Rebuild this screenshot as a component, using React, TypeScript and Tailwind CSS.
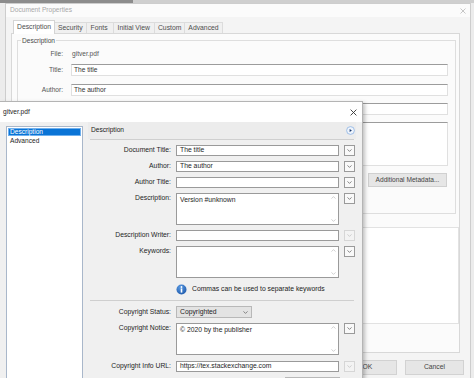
import React from "react";

const Chev = ({ dim = false, up = false }: { dim?: boolean; up?: boolean }) => (
  <svg width="5" height="3" viewBox="0 0 5 3" className="block">
    <polyline
      points={up ? "0.5,2.6 2.5,0.6 4.5,2.6" : "0.5,0.4 2.5,2.4 4.5,0.4"}
      fill="none"
      stroke={dim ? "#c4c4c4" : "#6a6a6a"}
      strokeWidth="0.8"
    />
  </svg>
);

const DropBtn = ({ dim = false }: { dim?: boolean }) => (
  <div
    className={`w-[11px] h-[11px] shrink-0 flex items-center justify-center border ${
      dim ? "border-[#d6d6d6] bg-[#f3f3f3]" : "border-[#9a9a9a] bg-[#f9f9f9]"
    }`}
  >
    <Chev dim={dim} />
  </div>
);

const Field = ({ label, value = "", dim = false }: { label: string; value?: string; dim?: boolean }) => (
  <div className="flex items-center gap-[5px] h-[11px]">
    <div className="w-[83px] text-right leading-none whitespace-nowrap">{label}</div>
    <div className="w-[163px] h-[11px] border border-[#9a9a9a] bg-white flex items-center px-[3px] leading-none">
      {value}
    </div>
    <DropBtn dim={dim} />
  </div>
);

const Area = ({ label, value = "", btn = true }: { label: string; value?: string; btn?: boolean }) => (
  <div className="flex items-start gap-[5px]">
    <div className="w-[83px] h-[11px] flex items-center justify-end leading-none whitespace-nowrap">{label}</div>
    <div className="w-[163px] h-[32px] border border-[#9a9a9a] bg-white flex">
      <div className="flex-1 px-[3px] pt-[2px] leading-[8px]">{value}</div>
      <div className="w-[9px] flex flex-col items-center justify-between py-[2px]">
        <Chev dim up />
        <Chev dim />
      </div>
    </div>
    {btn ? <DropBtn /> : <div className="w-[11px]" />}
  </div>
);

const BgInput = ({ h = 12, text = "" }: { h?: number; text?: string }) => (
  <div
    className="w-[377px] bg-white border border-[#e0e0e0] border-t-[#9c9c9c] flex items-center px-[2px] text-[6.6px] text-[#333] leading-none"
    style={{ height: h }}
  >
    {text}
  </div>
);

export default function App() {
  return (
    <div className="relative w-[474px] h-[378px] overflow-hidden bg-[#ececec] font-['Liberation_Sans',Arial,sans-serif]">
      {/* top strip */}
      <div className="h-[3px] flex bg-[#cfcfcf]">
        <div className="w-[133px] bg-[#8c8c8c]" />
      </div>

      {/* background dialog */}
      <div className="ml-[5px] w-[466px] h-[375px] border-x border-t border-[#cdcdcd] bg-[#f4f4f4] flex flex-col">
        <div className="h-[13px] bg-[#fbfbfb] flex items-center justify-between pl-[4px] pr-[4px]">
          <span className="text-[6.6px] text-[#a8a8a8] leading-none">Document Properties</span>
          <svg width="6" height="6" viewBox="0 0 6 6">
            <path d="M0.5 0.5L5.5 5.5M5.5 0.5L0.5 5.5" stroke="#b9b9b9" strokeWidth="0.8" />
          </svg>
        </div>

        {/* tabs */}
        <div className="flex items-end pt-[3px] pl-[7px] h-[16px] text-[6.8px] text-[#4d4d4d] leading-none">
          <div className="h-[14px] px-[3px] bg-white border-x border-t border-[#d4d4d4] flex items-center -mb-px relative z-10">
            Description
          </div>
          <div className="h-[11px] flex border-t border-r border-[#dcdcdc] bg-[#f0f0f0]">
            <div className="px-[3px] flex items-center border-r border-[#dcdcdc]">Security</div>
            <div className="px-[4px] pr-[5px] flex items-center border-r border-[#dcdcdc]">Fonts</div>
            <div className="px-[4px] flex items-center border-r border-[#dcdcdc]">Initial View</div>
            <div className="px-[3px] flex items-center border-r border-[#dcdcdc]">Custom</div>
            <div className="px-[3px] flex items-center">Advanced</div>
          </div>
        </div>

        {/* panel */}
        <div className="ml-[5px] w-[449px] h-[320px] border border-[#d8d8d8] bg-[#fbfbfb] flex flex-col">
          <fieldset className="mt-[2px] ml-[5px] w-[439px] border border-[#dedede] pb-[26px]">
            <legend className="ml-[3px] px-[1px] text-[6.6px] leading-[9px] text-[#4a4a4a]">Description</legend>
            <div className="flex flex-col text-[6.6px] text-[#555] leading-none">
              <div className="flex items-center h-[10px] mt-[4px]">
                <div className="w-[45px] text-right">File:</div>
                <div className="ml-[9px]">gitver.pdf</div>
              </div>
              <div className="flex items-center mt-[5px]">
                <div className="w-[45px] text-right">Title:</div>
                <div className="ml-[8px]">
                  <BgInput text="The title" />
                </div>
              </div>
              <div className="flex items-center mt-[8px]">
                <div className="w-[45px] text-right">Author:</div>
                <div className="ml-[8px]">
                  <BgInput text="The author" />
                </div>
              </div>
              <div className="flex items-center mt-[7px]">
                <div className="w-[45px] text-right">Subject:</div>
                <div className="ml-[8px]">
                  <BgInput />
                </div>
              </div>
              <div className="flex items-start mt-[7px]">
                <div className="w-[45px] text-right">Keywords:</div>
                <div className="ml-[8px]">
                  <BgInput h={44} />
                </div>
              </div>
              <div className="flex justify-end mt-[7px] pr-[8px]">
                <div className="w-[79px] h-[14px] bg-[#e6e6e6] border border-[#d0d0d0] flex items-center justify-center text-[6.6px] text-[#444]">
                  Additional Metadata...
                </div>
              </div>
            </div>
          </fieldset>
          <div className="mt-[13px] ml-[5px] w-[442px] h-[97px] border border-[#e2e2e2] bg-white" />
        </div>

        {/* buttons */}
        <div className="flex justify-end gap-[8px] mt-[7px] pr-[6px] text-[6.8px] text-[#444]">
          <div className="w-[59px] h-[15px] bg-[#e6e6e6] border border-[#d2d2d2] flex items-center justify-center">OK</div>
          <div className="w-[59px] h-[15px] bg-[#e6e6e6] border border-[#d2d2d2] flex items-center justify-center">Cancel</div>
        </div>
      </div>

      {/* front dialog */}
      <div className="absolute left-0 top-[101px] w-[363px] h-[290px] border-t border-r border-[#b4b4b4] bg-[#f0f0f0] shadow-[2px_2px_4px_rgba(0,0,0,0.25)] flex flex-col text-[#1e1e1e]">
        <div className="h-[21px] bg-white flex items-center justify-between pl-[3px] pr-[5px]">
          <span className="text-[6.6px] leading-none text-[#222]">gitver.pdf</span>
          <svg width="7" height="7" viewBox="0 0 7 7">
            <path d="M0.6 0.6L6.4 6.4M6.4 0.6L0.6 6.4" stroke="#333" strokeWidth="0.9" />
          </svg>
        </div>
        <div className="flex flex-1">
          {/* list */}
          <div className="mt-[4px] ml-[6px] w-[77px] border border-[#a9b7ca] bg-white p-px text-[6.6px] leading-none">
            <div className="h-[8px] bg-[#0a74d6] border border-[#6fb0ee] text-white flex items-center pl-[1px]">
              Description
            </div>
            <div className="h-[10px] flex items-center pl-[2px]">Advanced</div>
          </div>

          {/* right pane */}
          <div className="ml-[5px] w-[268px] flex flex-col text-[6.8px]">
            <div className="h-[17px] flex items-center justify-between pl-[3px] bg-[#ececec]">
              <span className="text-[6.6px] leading-none text-[#222]">Description</span>
              <svg width="9" height="9" viewBox="0 0 9 9" className="mr-[1px]">
                <circle cx="4.5" cy="4.5" r="3.9" fill="#eef4fc" stroke="#8db3e2" strokeWidth="0.8" />
                <path d="M3.6 2.9L5.9 4.5L3.6 6.1Z" fill="#1d3a6d" />
              </svg>
            </div>
            <div className="h-px bg-[#cfcfcf] mx-[2px] w-[264px]" />
            <div className="flex flex-col gap-[5px] pt-[5px]">
              <Field label="Document Title:" value="The title" />
              <Field label="Author:" value="The author" />
              <Field label="Author Title:" />
              <Area label="Description:" value="Version #unknown" />
              <Field label="Description Writer:" dim />
              <Area label="Keywords:" />
            </div>
            <div className="flex items-center h-[12px] mt-[5px] pl-[88px]">
              <svg width="11" height="11" viewBox="0 0 11 11">
                <defs>
                  <radialGradient id="ig" cx="0.4" cy="0.3" r="0.8">
                    <stop offset="0" stopColor="#5b9be3" />
                    <stop offset="1" stopColor="#1a55a8" />
                  </radialGradient>
                </defs>
                <circle cx="5.5" cy="5.5" r="5" fill="url(#ig)" />
                <circle cx="5.5" cy="3" r="0.9" fill="#fff" />
                <rect x="4.7" y="4.4" width="1.6" height="4.2" fill="#fff" />
              </svg>
              <span className="ml-[5px] leading-none text-[#222]">Commas can be used to separate keywords</span>
            </div>
            <div className="h-px bg-[#cfcfcf] mt-[5px] mx-[2px] w-[264px]" />
            <div className="flex flex-col pt-[5px]">
              <div className="flex items-center gap-[5px] h-[12px]">
                <div className="w-[83px] text-right leading-none whitespace-nowrap">Copyright Status:</div>
                <div className="w-[76px] h-[12px] bg-[#e3e3e3] border border-[#b8b8b8] flex items-center justify-between px-[3px] leading-none">
                  <span>Copyrighted</span>
                  <Chev />
                </div>
              </div>
              <div className="mt-[5px]">
                <Area label="Copyright Notice:" value="© 2020 by the publisher" />
              </div>
              <div className="mt-[6px]">
                <Field label="Copyright Info URL:" value="https://tex.stackexchange.com" dim />
              </div>
              <div className="flex mt-[5px] pl-[197px]">
                <div className="w-[55px] h-[14px] bg-[#e3e3e3] border border-[#b8b8b8]" />
              </div>
            </div>
          </div>
        </div>
      </div>
    </div>
  );
}
